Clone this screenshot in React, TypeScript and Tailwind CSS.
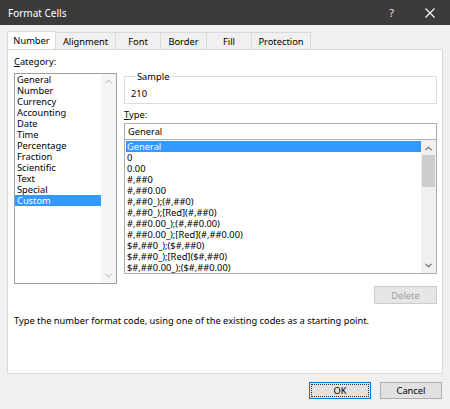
const categories = [
  'General',
  'Number',
  'Currency',
  'Accounting',
  'Date',
  'Time',
  'Percentage',
  'Fraction',
  'Scientific',
  'Text',
  'Special',
  'Custom',
]

const formats = [
  'General',
  '0',
  '0.00',
  '#,##0',
  '#,##0.00',
  '#,##0_);(#,##0)',
  '#,##0_);[Red](#,##0)',
  '#,##0.00_);(#,##0.00)',
  '#,##0.00_);[Red](#,##0.00)',
  '$#,##0_);($#,##0)',
  '$#,##0_);[Red]($#,##0)',
  '$#,##0.00_);($#,##0.00)',
]

const tabs = [
  { label: 'Number', w: 'w-[49px]' },
  { label: 'Alignment', w: 'w-[60px]' },
  { label: 'Font', w: 'w-[45px]' },
  { label: 'Border', w: 'w-[46px]' },
  { label: 'Fill', w: 'w-[45px]' },
  { label: 'Protection', w: 'w-[59px]' },
]

function Chevron({ up, color }: { up?: boolean; color: string }) {
  return (
    <svg width="7" height="5" viewBox="0 0 7 5" fill="none">
      <path
        d={up ? 'M0.5 4.2 L3.5 1.2 L6.5 4.2' : 'M0.5 0.8 L3.5 3.8 L6.5 0.8'}
        stroke={color}
        strokeWidth="1.1"
      />
    </svg>
  )
}

export default function App() {
  return (
    <div className="w-[450px] h-[409px] bg-[#f0f0f0] flex flex-col font-['Noto_Sans',sans-serif] text-[9.3px] leading-[11px] text-black overflow-hidden">
      {/* Title bar */}
      <div className="h-[25px] shrink-0 bg-[#3b3b3b] flex items-center pl-[8px] text-white">
        <span className="text-[10px] leading-[12px]">Format Cells</span>
        <span className="ml-auto text-[11px] leading-[13px] text-[#e6e6e6]">?</span>
        <svg className="ml-[31px] mr-[15px]" width="10" height="10" viewBox="0 0 10 10">
          <path d="M0.5 0.5 L9.5 9.5 M9.5 0.5 L0.5 9.5" stroke="#ffffff" strokeWidth="1.1" />
        </svg>
      </div>

      <div className="px-[7px] pt-[7px] flex flex-col">
        {/* Tabs */}
        <div className="flex h-[17px]">
          {tabs.map((t, i) =>
            i === 0 ? (
              <div
                key={t.label}
                className={`${t.w} h-[18px] -mt-px bg-white border border-b-0 border-[#d9d9d9] flex items-center justify-center relative z-10`}
              >
                {t.label}
              </div>
            ) : (
              <div
                key={t.label}
                className={`${t.w} h-[17px] bg-[#f0f0f0] border border-l-0 border-b-0 border-[#d9d9d9] flex items-center justify-center`}
              >
                {t.label}
              </div>
            ),
          )}
        </div>

        {/* Panel */}
        <div className="h-[325px] bg-white border border-[#d9d9d9] flex flex-col">
          <div className="flex pl-[6px] pr-[5px]">
            {/* Category column */}
            <div className="w-[103px] flex flex-col pt-[6px]">
              <div className="h-[11px]">
                <span className="underline underline-offset-[1px]">C</span>ategory:
              </div>
              <div className="mt-[6px] h-[211px] border border-[#a0a0a0] flex">
                <div className="flex-1 flex flex-col">
                  {categories.map((c) => (
                    <div
                      key={c}
                      className={`h-[11px] pl-[2px] ${c === 'Custom' ? 'bg-[#3399ff] text-white' : ''}`}
                    >
                      {c}
                    </div>
                  ))}
                </div>
                <div className="w-[15px] bg-[#f5f5f5] flex flex-col items-center justify-between pt-[5px] pb-[5px]">
                  <Chevron up color="#c8c8c8" />
                  <Chevron color="#c8c8c8" />
                </div>
              </div>
            </div>

            {/* Right column */}
            <div className="flex-1 ml-[7px] flex flex-col pt-[21px]">
              <fieldset className="h-[33px] border border-[#dcdcdc] pl-[6px]">
                <legend className="ml-[5px] px-[1px] leading-[11px]">Sample</legend>
                <div className="pt-[6px]">210</div>
              </fieldset>

              <div className="mt-[5px] h-[11px]">
                <span className="underline underline-offset-[1px]">T</span>ype:
              </div>
              <div className="mt-[3px] h-[17px] border border-[#abadb3] flex items-center pl-[3px]">
                General
              </div>
              <div className="h-[134px] border border-t-0 border-[#abadb3] flex">
                <div className="flex-1 flex flex-col pt-[1px] pl-[1px] overflow-hidden">
                  {formats.map((f, i) => (
                    <div
                      key={f}
                      className={`h-[11px] shrink-0 pl-[1px] whitespace-nowrap ${i === 0 ? 'bg-[#3399ff] text-white' : ''}`}
                    >
                      {f}
                    </div>
                  ))}
                </div>
                <div className="w-[15px] bg-[#f0f0f0] flex flex-col items-center pt-[6px] pb-[5px]">
                  <Chevron up color="#606060" />
                  <div className="mt-[4px] w-[13px] h-[32px] bg-[#cdcdcd]" />
                  <div className="flex-1" />
                  <Chevron color="#606060" />
                </div>
              </div>

              <div className="mt-[12px] self-end w-[63px] h-[18px] bg-[#e6e6e6] border border-[#cccccc] flex items-center justify-center text-[#a0a0a0]">
                Delete
              </div>
            </div>
          </div>

          <div className="mt-[11px] pl-[6px]">
            Type the number format code, using one of the existing codes as a starting point.
          </div>
        </div>
      </div>

      {/* Buttons */}
      <div className="flex justify-end gap-[9px] pr-[8px] mt-[8px]">
        <div className="w-[62px] h-[17px] bg-[#e1e1e1] border border-[#0078d7] p-[1px]">
          <div className="w-full h-full border border-dotted border-[#333333] flex items-center justify-center">
            OK
          </div>
        </div>
        <div className="w-[62px] h-[17px] bg-[#e1e1e1] border border-[#adadad] flex items-center justify-center">
          Cancel
        </div>
      </div>
    </div>
  )
}
